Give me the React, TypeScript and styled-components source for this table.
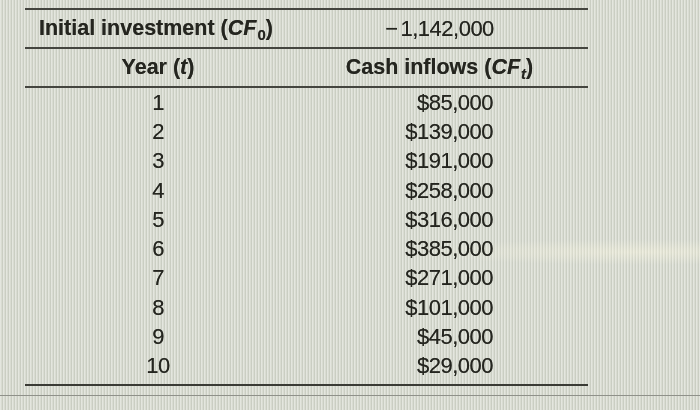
import React from "react";
import styled, { createGlobalStyle } from "styled-components";

const Global = createGlobalStyle`
  html, body { margin: 0; padding: 0; }
  body { width: 700px; height: 410px; overflow: hidden; font-family: "Liberation Sans", Arial, sans-serif; }
`;

const Page = styled.div`
  position: relative;
  width: 700px;
  height: 410px;
  box-sizing: border-box;
  padding: 8px 0 0 25px;
  background-color: #d9dcd2;
  background-image:
    radial-gradient(ellipse 230px 13px at 640px 252px, rgba(255,250,226,0.38), rgba(255,250,226,0)),
    repeating-linear-gradient(90deg, rgba(255,255,255,0.28) 0px, rgba(255,255,255,0.28) 1px, rgba(0,0,0,0) 1px, rgba(0,0,0,0) 2px, rgba(110,118,100,0.14) 2px, rgba(110,118,100,0.14) 3px);
  color: #24251f;
  font-family: "Liberation Sans", Arial, sans-serif;
  filter: blur(0.35px);
`;

const Table = styled.div`
  width: 563px;
  display: grid;
  grid-template-columns: 266px 297px;
  border-top: 2px solid #44453f;
  border-bottom: 2px solid #3a3b35;
`;

const HeaderCell = styled.div<{ $align: "left" | "center"; $bold?: boolean }>`
  height: 37px;
  display: flex;
  align-items: center;
  justify-content: ${(p) => (p.$align === "left" ? "flex-start" : "center")};
  padding-left: ${(p) => (p.$align === "left" ? "14px" : "0")};
  font-size: 21.5px;
  font-weight: ${(p) => (p.$bold ? 700 : 400)};
  border-bottom: 2px solid #44453f;
  white-space: nowrap;
  text-shadow: 0 0 0.6px rgba(30, 30, 25, 0.6);
`;

const Num = styled.span`
  font-size: 22px;
  font-weight: 400;
  letter-spacing: -0.5px;
`;

const Minus = styled.span`
  margin-right: 3px;
`;

const Sub = styled.span<{ $italic?: boolean }>`
  display: inline-block;
  font-size: 15px;
  font-style: ${(p) => (p.$italic ? "italic" : "normal")};
  transform: translateY(6px);
  margin-left: 1px;
`;

const Body = styled.div`
  grid-column: 1 / span 2;
  display: grid;
  grid-template-columns: 266px 297px;
  padding: 0 0 3px;
`;

const YearCell = styled.div`
  height: 29.3px;
  display: flex;
  align-items: center;
  justify-content: center;
  font-size: 22px;
  letter-spacing: -0.5px;
  text-shadow: 0 0 0.6px rgba(30, 30, 25, 0.6);
`;

const FlowCell = styled.div`
  height: 29.3px;
  display: flex;
  align-items: center;
  justify-content: flex-end;
  padding-right: 95px;
  font-size: 22px;
  letter-spacing: -0.5px;
  text-shadow: 0 0 0.6px rgba(30, 30, 25, 0.6);
`;

const FaintRule = styled.div`
  position: absolute;
  left: 0;
  right: 0;
  top: 395px;
  height: 1px;
  background: #8f918a;
`;

const flows = [
  "$85,000",
  "$139,000",
  "$191,000",
  "$258,000",
  "$316,000",
  "$385,000",
  "$271,000",
  "$101,000",
  "$45,000",
  "$29,000",
];

export default function App() {
  return (
    <>
      <Global />
      <Page>
        <Table>
          <HeaderCell $align="left" $bold>
            Initial investment (<i>CF</i>
            <Sub>0</Sub>)
          </HeaderCell>
          <HeaderCell $align="center">
            <Num>
              <Minus>−</Minus>1,142,000
            </Num>
          </HeaderCell>
          <HeaderCell $align="center" $bold>
            Year (<i>t</i>)
          </HeaderCell>
          <HeaderCell $align="center" $bold>
            Cash inflows (<i>CF</i>
            <Sub $italic>t</Sub>)
          </HeaderCell>
          <Body>
            {flows.map((f, i) => (
              <React.Fragment key={i}>
                <YearCell>{i + 1}</YearCell>
                <FlowCell>{f}</FlowCell>
              </React.Fragment>
            ))}
          </Body>
        </Table>
        <FaintRule />
      </Page>
    </>
  );
}
